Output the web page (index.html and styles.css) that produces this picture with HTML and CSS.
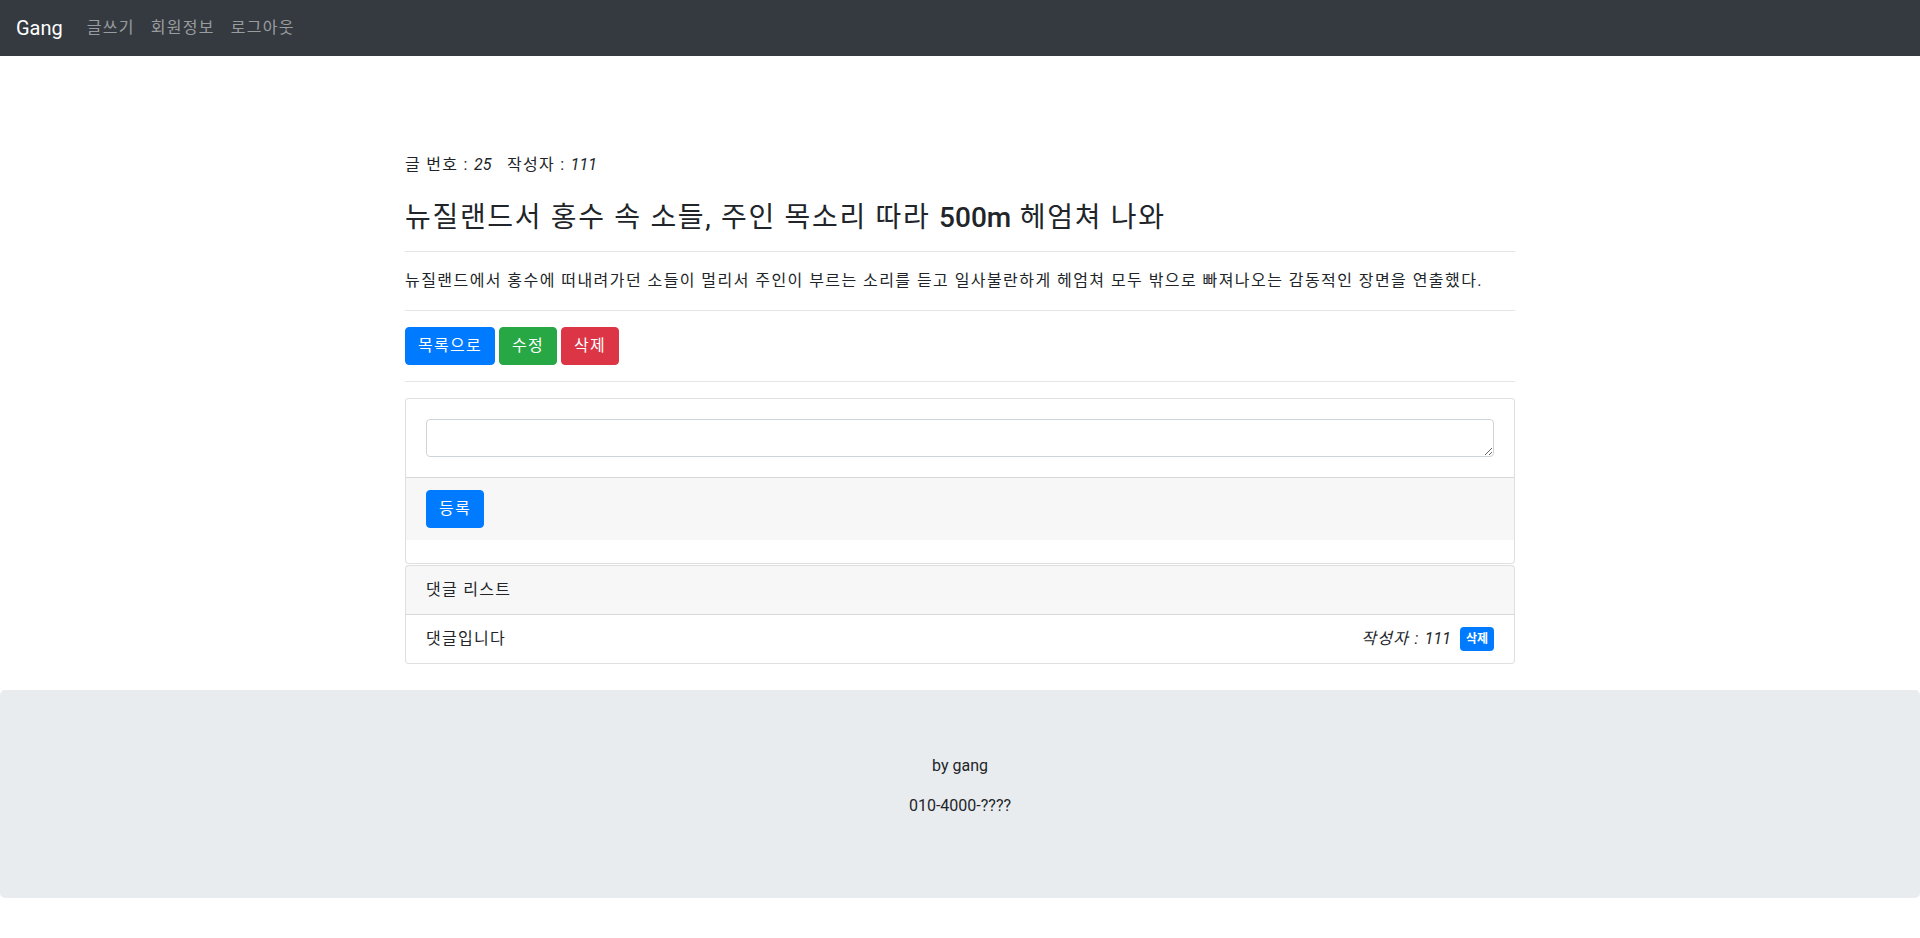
FILE: index.html
```html
<!DOCTYPE html>
<html lang="ko">
<head>
    <meta charset="UTF-8">
    <meta name="viewport" content="width=device-width, initial-scale=1.0">
    <title>Gang</title>
    <link rel="stylesheet" href="styles.css">
</head>
<body>
    <nav class="navbar">
        <a class="brand" href="#">Gang</a>
        <ul class="nav">
            <li><a href="#">글쓰기</a></li>
            <li><a href="#">회원정보</a></li>
            <li><a href="#">로그아웃</a></li>
        </ul>
    </nav>

    <main class="container">
        <div class="meta">
            글 번호 : <i>25</i>&nbsp;&nbsp;&nbsp;작성자 : <i>111</i>
        </div>
        <h3 class="title">뉴질랜드서 홍수 속 소들, 주인 목소리 따라 <span class="num">500m</span> 헤엄쳐 나와</h3>
        <hr>
        <div class="content">뉴질랜드에서 홍수에 떠내려가던 소들이 멀리서 주인이 부르는 소리를 듣고 일사불란하게 헤엄쳐 모두 밖으로 빠져나오는 감동적인 장면을 연출했다.</div>
        <hr>
        <div class="actions">
            <button class="btn btn-primary">목록으로</button>
            <button class="btn btn-success">수정</button>
            <button class="btn btn-danger">삭제</button>
        </div>
        <hr>

        <div class="card reply-form">
            <div class="card-body">
                <textarea rows="1"></textarea>
            </div>
            <div class="card-footer">
                <button class="btn btn-primary">등록</button>
            </div>
        </div>

        <div class="card reply-list">
            <div class="card-header">댓글 리스트</div>
            <ul class="list">
                <li class="list-item">
                    <div>댓글입니다</div>
                    <div class="reply-meta">
                        <i>작성자 : <span class="num">111</span></i>
                        <span class="badge">삭제</span>
                    </div>
                </li>
            </ul>
        </div>
    </main>

    <footer class="footer">
        <p>by gang</p>
        <p>010-4000-????</p>
    </footer>
</body>
</html>
```

FILE: styles.css
```css
body {
    font-family: Roboto, "Noto Sans CJK KR", sans-serif;
    font-size: 16px;
    line-height: 1.5;
    margin: 0;
    padding: 0;
    color: #212529;
    background-color: #fff;
}

a {
    text-decoration: none;
}

/* korean text in the reference runs a bit wider */
.nav,
.meta,
.content,
.btn,
.card-header,
.list-item {
    letter-spacing: 0.08em;
}

.meta i,
.num {
    letter-spacing: 0;
}

.navbar {
    display: flex;
    align-items: center;
    height: 56px;
    padding: 0 16px;
    background-color: #343a40;
    box-sizing: border-box;
}

.brand {
    color: #fff;
    font-size: 20px;
    margin-right: 16px;
}

.nav {
    display: flex;
    list-style: none;
    margin: 0;
    padding: 0;
}

.nav li a {
    display: block;
    padding: 8px;
    color: rgba(255, 255, 255, 0.5);
}

.container {
    width: 1110px;
    margin: 0 auto;
    padding-top: 97px;
}

.meta {
    margin-bottom: 24px;
}

.title {
    font-size: 28px;
    font-weight: 400;
    line-height: 1.2;
    letter-spacing: 0.06em;
    margin: 0 0 8px 0;
}

.title .num {
    font-weight: 500;
}

hr {
    border: 0;
    border-top: 1px solid rgba(0, 0, 0, 0.1);
    margin: 16px 0;
}

.content {
    line-height: 26px;
    letter-spacing: 0.09em;
}

.actions {
    display: flex;
    gap: 4px;
}

.btn {
    font-family: inherit;
    font-size: 16px;
    line-height: 24px;
    height: 38px;
    padding: 6px 12px;
    border: 1px solid transparent;
    border-radius: 4px;
    color: #fff;
    cursor: pointer;
}

.btn-primary {
    background-color: #007bff;
    border-color: #007bff;
}

.btn-success {
    background-color: #28a745;
    border-color: #28a745;
}

.btn-danger {
    background-color: #dc3545;
    border-color: #dc3545;
}

.card {
    border: 1px solid rgba(0, 0, 0, 0.125);
    border-radius: 4px;
    background-color: #fff;
}

.reply-form {
    padding-bottom: 23px;
}

.card-body {
    padding: 20px;
}

.card-body textarea {
    display: block;
    width: 100%;
    box-sizing: border-box;
    height: 38px;
    padding: 6px 12px;
    font-family: inherit;
    font-size: 16px;
    line-height: 1.5;
    border: 1px solid #ced4da;
    border-radius: 4px;
    color: #495057;
}

.card-footer {
    padding: 12px 20px;
    background-color: rgba(0, 0, 0, 0.03);
    border-top: 1px solid rgba(0, 0, 0, 0.125);
}

.reply-list {
    margin-top: 1px;
    margin-bottom: 26px;
}

.card-header {
    padding: 12px 20px;
    background-color: rgba(0, 0, 0, 0.03);
    border-bottom: 1px solid rgba(0, 0, 0, 0.125);
}

.list {
    list-style: none;
    margin: 0;
    padding: 0;
}

.list-item {
    display: flex;
    justify-content: space-between;
    align-items: center;
    padding: 12px 20px;
}

.reply-meta {
    display: flex;
    align-items: center;
    gap: 9px;
}

.badge {
    display: inline-block;
    background-color: #007bff;
    color: #fff;
    font-size: 12px;
    font-weight: 700;
    font-style: normal;
    line-height: 12px;
    letter-spacing: 0;
    padding: 6px;
    border-radius: 4px;
}

.footer {
    background-color: #e9ecef;
    border-radius: 5px;
    padding: 64px 32px;
    margin-bottom: 32px;
    text-align: center;
}

.footer p {
    margin: 0 0 16px 0;
}
```
